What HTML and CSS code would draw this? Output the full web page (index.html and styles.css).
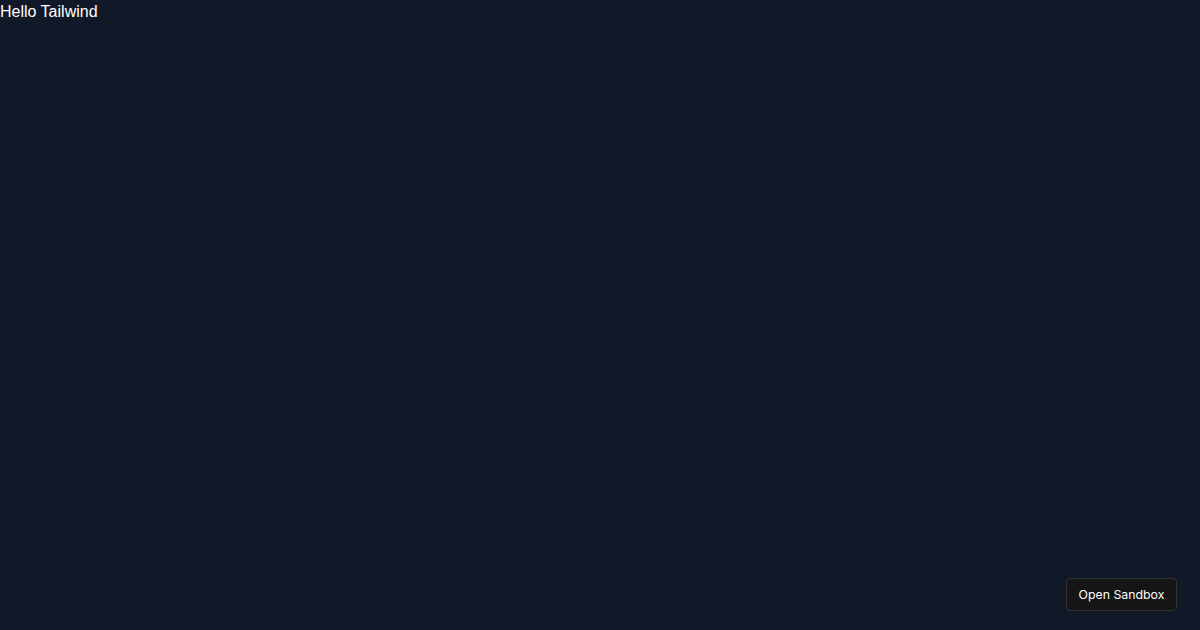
FILE: index.html
```html
<!DOCTYPE html>
<html>
<head>
<meta charset="utf-8">
<link rel="stylesheet" href="styles.css">
</head>
<body>
<div class="hello">Hello Tailwind</div>
<a class="sandbox-btn" href="#">Open Sandbox</a>
</body>
</html>
```

FILE: styles.css
```css
html, body {
  margin: 0;
  padding: 0;
  height: 100%;
}
body {
  background: #111827;
  color: #ffffff;
  font-family: "Liberation Sans", Arial, sans-serif;
  font-size: 16px;
  line-height: 24px;
}
.hello {
  color: #ffffff;
}
.sandbox-btn {
  position: fixed;
  right: 23px;
  bottom: 19px;
  box-sizing: border-box;
  width: 111px;
  height: 33px;
  padding: 0;
  display: flex;
  align-items: center;
  justify-content: center;
  background: #151515;
  border: 1px solid #343434;
  border-radius: 4px;
  color: #ffffff;
  font-family: Inter, "Liberation Sans", sans-serif;
  font-size: 12.3px;
  text-decoration: none;
}
```
